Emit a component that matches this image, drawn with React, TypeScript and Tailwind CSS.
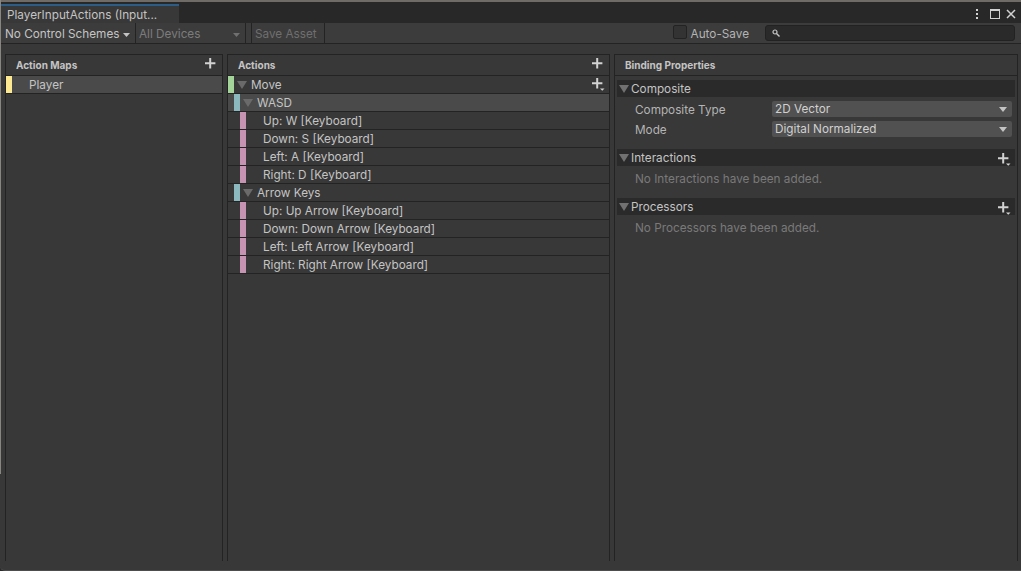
const Tri = ({ c = "#6e6e6e", w = 10, h = 8 }: { c?: string; w?: number; h?: number }) => (
  <svg width={w} height={h} viewBox="0 0 10 8" preserveAspectRatio="none" className="shrink-0"><path d="M0 0H10L5 8Z" fill={c} /></svg>
);
const Plus = ({ small }: { small?: boolean }) => (
  <svg width="13" height="13" viewBox="0 0 13 13" className="shrink-0">
    <path d="M4.2 0h2v4.2H10.4v2H6.2v4.2h-2V6.2H0v-2h4.2z" fill="#d2d2d2" />
    {small && <path d="M8 10.5h4.5l-2.2 2.2z" fill="#d2d2d2" />}
  </svg>
);
const Row = ({ color, indent, label, arrow, selected }: { color: string; indent: string; label: string; arrow?: boolean; selected?: boolean }) => (
  <div className={`flex h-[18px] items-stretch border-b border-[#232323] ${selected ? "bg-[#4a4a4a]" : "bg-[#383838]"} ${indent}`}>
    <div className="w-[6px] shrink-0" style={{ background: color }} />
    {arrow && <div className="ml-[3px] mr-[4px] flex items-center"><Tri c="#6a6a6a" /></div>}
    <div className={`flex items-center whitespace-nowrap pt-[2px] text-[#c4c4c4] ${arrow ? "" : "ml-[17px]"}`}>{label}</div>
  </div>
);
const Section = ({ label, plus }: { label: string; plus?: boolean }) => (
  <div className="flex h-[17px] items-center bg-[#2a2a2a] pl-[2px] pr-[4px]">
    <div className="mr-[2px]"><Tri c="#717171" /></div>
    <span className="pt-[2px] text-[#c4c4c4]">{label}</span>
    {plus && <div className="ml-auto mt-[4px] self-start"><Plus small /></div>}
  </div>
);
const Select = ({ label }: { label: string }) => (
  <div className="flex h-[16px] w-[240px] items-center justify-between rounded-[2px] bg-[#515151] pl-[3px] pr-[5px] text-[#d0d0d0]">
    <span className="pt-[2px]">{label}</span><Tri c="#c4c4c4" w={8} h={5} />
  </div>
);
const Head = ({ title, plus }: { title: string; plus?: boolean }) => (
  <div className="flex h-[21px] shrink-0 items-stretch justify-between border-b border-[#232323] pl-[10px] pr-[6px] text-[10px] font-bold text-[#c4c4c4]">
    <span className="flex items-center">{title}</span>{plus && <div className="mt-[3px] -mr-[2px]"><Plus /></div>}
  </div>
);
const wasd = ["Up: W [Keyboard]", "Down: S [Keyboard]", "Left: A [Keyboard]", "Right: D [Keyboard]"];
const arrows = ["Up: Up Arrow [Keyboard]", "Down: Down Arrow [Keyboard]", "Left: Left Arrow [Keyboard]", "Right: Right Arrow [Keyboard]"];

export default function App() {
  return (
    <div className="bg-[#2a2a2a]">
    <div className="relative flex h-[571px] w-[1021px] flex-col overflow-hidden rounded-bl-[5px] border-b border-b-[#4d4d4d] bg-[#383838] font-['Inter','Liberation_Sans',sans-serif] text-[11.75px] leading-none">
      <div className="absolute left-0 top-0 h-[474px] w-[1px] bg-[#8a8580]" />
      <div className="h-[2px] shrink-0 bg-[#6f6b67]" />
      <div className="flex h-[21px] shrink-0 items-stretch bg-[#282828] pt-[2px]">
        <div className="flex w-[179px] items-center border-t-2 border-[#2c5d87] bg-[#383838] pl-[7px] pt-[2px] text-[#c4c4c4]">PlayerInputActions (Input...</div>
        <div className="ml-auto flex items-center pr-[5px]">
          <svg width="4" height="10" viewBox="0 0 4 10"><rect x="1" y="0" width="2" height="2" fill="#d2d2d2" /><rect x="1" y="4" width="2" height="2" fill="#d2d2d2" /><rect x="1" y="8" width="2" height="2" fill="#d2d2d2" /></svg>
          <svg width="10" height="10" viewBox="0 0 10 10" className="ml-[11px]"><rect x=".5" y=".5" width="9" height="9" fill="none" stroke="#d2d2d2" /><rect width="10" height="2" fill="#d2d2d2" /></svg>
          <svg width="10" height="10" viewBox="0 0 10 10" className="ml-[6px]"><path d="M1 1l8 8M9 1l-8 8" stroke="#d2d2d2" strokeWidth="1.5" /></svg>
        </div>
      </div>
      <div className="flex h-[21px] shrink-0 items-stretch border-b border-[#232323] bg-[#3c3c3c]">
        <div className="flex w-[136px] items-center justify-between border-r border-[#232323] pl-[5px] pr-[5px] pt-[3px] text-[#c4c4c4]">No Control Schemes<Tri c="#c4c4c4" w={7} h={4} /></div>
        <div className="flex w-[110px] items-center justify-between border-r border-[#232323] pl-[3px] pr-[5px] pt-[3px] text-[#7c7c7c]">All Devices<Tri c="#707070" w={7} h={4} /></div>
        <div className="ml-[5px] flex w-[74px] items-center border-x border-[#232323] pl-[3px] pt-[3px] text-[#6f6f6f]">Save Asset</div>
        <div className="ml-auto flex items-center pr-[6px]">
          <div className="-mt-[2px] h-[14px] w-[14px] rounded-[2px] border border-[#232323] bg-[#333333]" />
          <span className="ml-[4px] mr-[16px] mt-[4px] text-[#b4b4b4]">Auto-Save</span>
          <div className="flex h-[16px] w-[250px] items-center rounded-[3px] border border-[#222222] bg-[#2a2a2a] pl-[6px]">
            <svg width="8" height="8" viewBox="0 0 8 8"><circle cx="3" cy="3" r="2" fill="none" stroke="#c4c4c4" strokeWidth="1.2" /><path d="M4.5 4.5L7.5 7.5" stroke="#c4c4c4" strokeWidth="1.4" /></svg>
          </div>
        </div>
      </div>
      <div className="flex flex-1 gap-[4px] pl-[5px] pr-[3px] pt-[10px] pb-[9px]">
        <div className="flex w-[218px] flex-col border-x border-t border-[#232323]">
          <Head title="Action Maps" plus />
          <div className="flex h-[18px] items-stretch border-b border-[#232323] bg-[#4a4a4a]">
            <div className="w-[6px] bg-[#fde992]" />
            <span className="ml-[17px] flex items-center pt-[2px] text-[#c4c4c4]">Player</span>
          </div>
        </div>
        <div className="flex w-[383px] flex-col border-x border-t border-[#232323]">
          <Head title="Actions" plus />
          <div className="flex h-[18px] items-stretch border-b border-[#232323] bg-[#383838]">
            <div className="w-[6px] bg-[#a5d49a]" />
            <div className="ml-[3px] mr-[4px] flex items-center"><Tri c="#6a6a6a" /></div>
            <span className="flex items-center pt-[2px] text-[#c4c4c4]">Move</span>
            <div className="ml-auto mr-[4px] mt-[2px]"><Plus small /></div>
          </div>
          <Row color="#8cb9c0" indent="pl-[6px]" label="WASD" arrow selected />
          {wasd.map((t) => <Row key={t} color="#c793b2" indent="pl-[12px]" label={t} />)}
          <Row color="#8cb9c0" indent="pl-[6px]" label="Arrow Keys" arrow />
          {arrows.map((t) => <Row key={t} color="#c793b2" indent="pl-[12px]" label={t} />)}
        </div>
        <div className="flex w-[404px] flex-col border-x border-t border-[#232323]">
          <Head title="Binding Properties" />
          <div className="px-[2px] pt-[4px]">
            <Section label="Composite" />
            <div className="flex flex-col gap-[4px] pt-[4px] pl-[18px] pr-[3px]">
              <div className="flex items-center justify-between text-[#b4b4b4]"><span className="pt-[3px]">Composite Type</span><Select label="2D Vector" /></div>
              <div className="flex items-center justify-between text-[#b4b4b4]"><span className="pt-[3px]">Mode</span><Select label="Digital Normalized" /></div>
            </div>
            <div className="mt-[12px]"><Section label="Interactions" plus /></div>
            <div className="h-[32px] pl-[18px] pt-[8px] text-[#7a7a7a]">No Interactions have been added.</div>
            <Section label="Processors" plus />
            <div className="pl-[18px] pt-[8px] text-[#7a7a7a]">No Processors have been added.</div>
          </div>
        </div>
      </div>
    </div>
    </div>
  );
}
